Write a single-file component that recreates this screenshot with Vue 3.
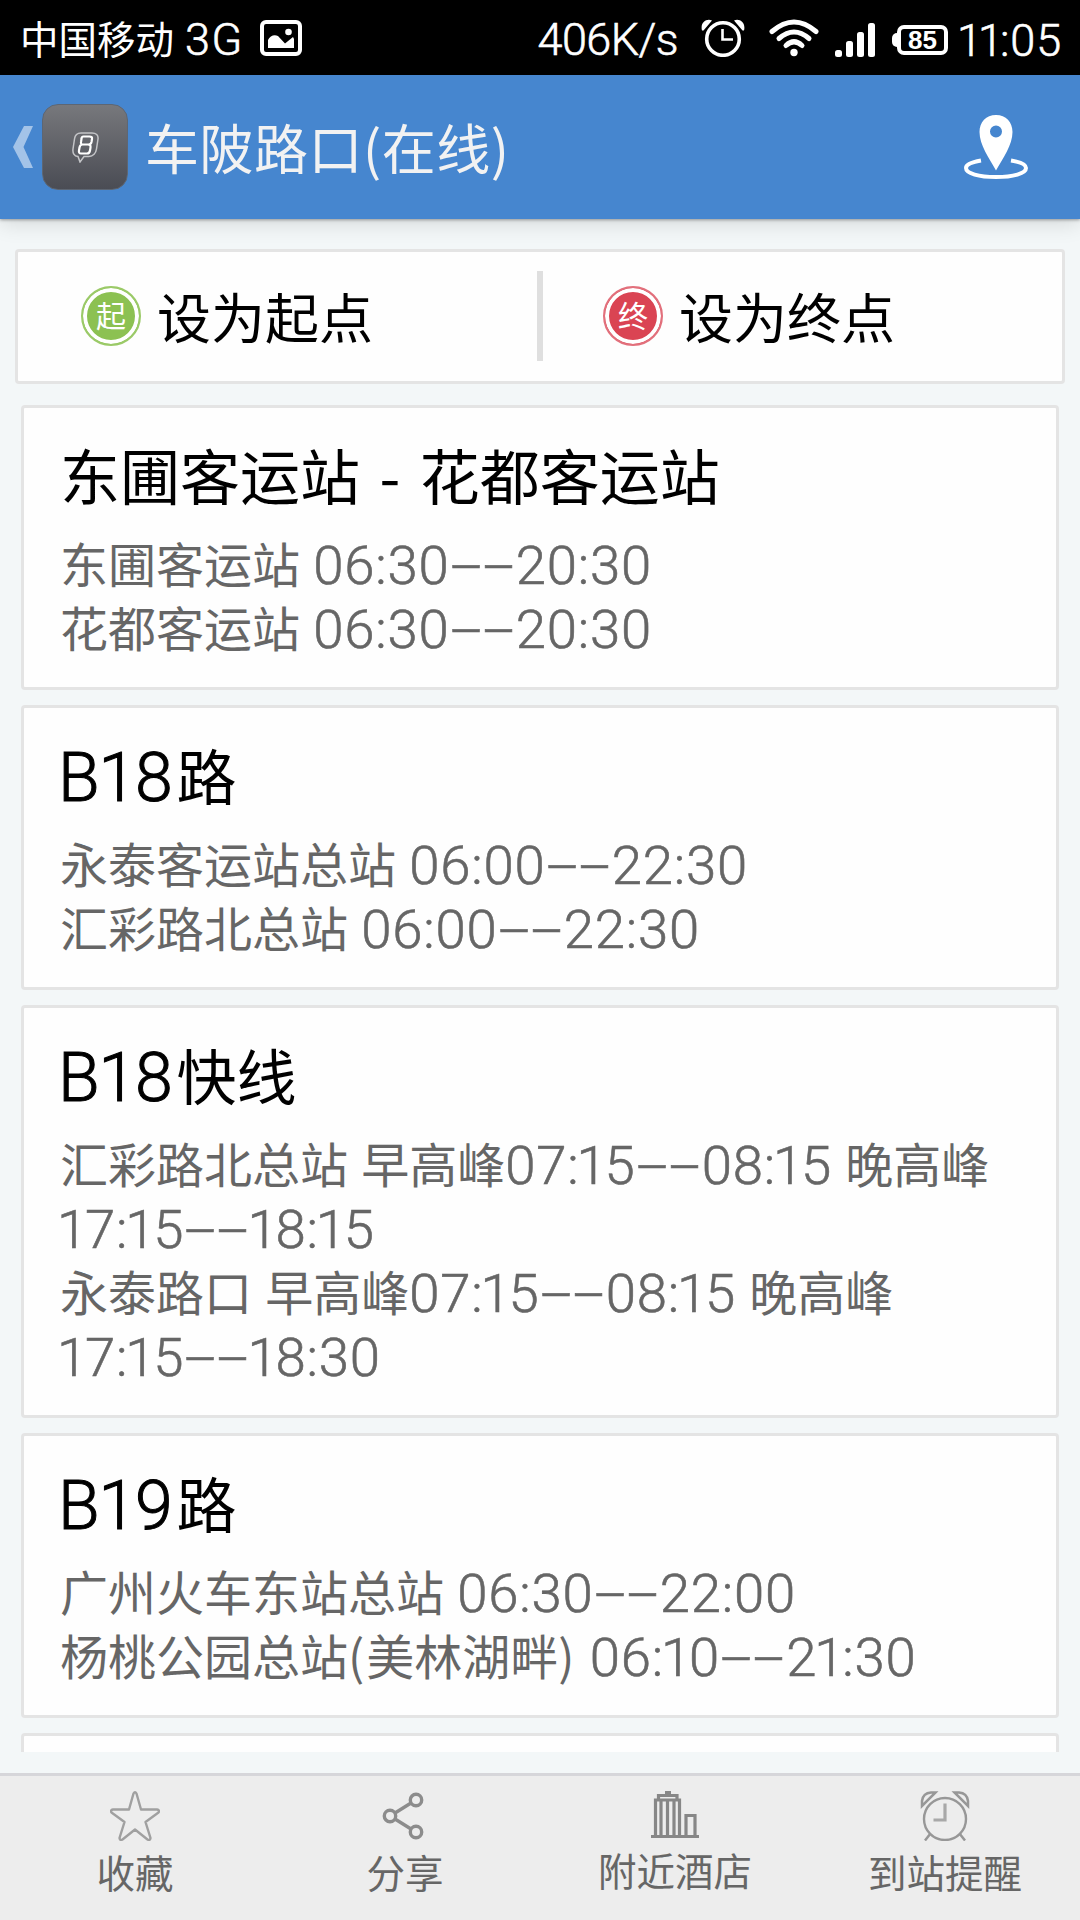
<template>
  <div class="screen">
    <!-- Status bar -->
    <div class="status-bar">
      <span class="carrier">中国移动</span>
      <span class="latin network">3G</span>
      <svg class="picture-icon" width="42" height="36" viewBox="0 0 42 36">
        <rect x="2" y="2" width="38" height="32" rx="4" fill="none" stroke="#fff" stroke-width="4" />
        <path d="M8 28V20C10 16 14 14 18 16L25 23.500L33 17L34 19V28Z" fill="#fff" />
        <circle cx="28.500" cy="12" r="3.300" fill="#fff" />
      </svg>
      <div class="status-right">
        <span class="latin speed">406K/s</span>
        <svg class="alarm-icon" width="44" height="38" viewBox="0 0 44 38">
          <circle cx="22" cy="20" r="16.300" fill="none" stroke="#fff" stroke-width="3.600" />
          <path d="M21.500 10V20.500H32" fill="none" stroke="#fff" stroke-width="2.600" />
          <path d="M1 11.500C-1 4 5 -1 11 1.500L2.500 11.500ZM43 11.500C45 4 39 -1 33 1.500L41.500 11.500Z" fill="#fff" />
        </svg>
        <svg class="wifi-icon" width="50" height="38" viewBox="0 0 50 38">
          <g fill="none" stroke="#fff" stroke-width="5" stroke-linecap="round">
            <path d="M3 12.500Q25 -6.500 47 12.500" />
            <path d="M10 19.500Q25 6.500 40 19.500" />
            <path d="M17 26.500Q25 19 33 26.500" />
          </g>
          <circle cx="25" cy="33.500" r="3.700" fill="#fff" />
        </svg>
        <svg class="signal-icon" width="40" height="34" viewBox="0 0 40 34" fill="#fff">
          <rect x="0" y="27" width="7" height="7" rx="2.500" />
          <rect x="11" y="18" width="7" height="16" rx="2.500" />
          <rect x="22" y="9" width="7" height="25" rx="2.500" />
          <rect x="33" y="0" width="7" height="34" rx="2.500" />
        </svg>
        <div class="battery">
          <span class="battery-level">85</span>
        </div>
        <span class="latin clock">
          <span v-for="(run, i) in splitRuns('11:05')" :key="i" :class="run.type">{{ run.text }}</span>
        </span>
      </div>
    </div>

    <!-- Header -->
    <header class="header">
      <svg class="back-icon" width="20" height="42" viewBox="0 0 20 42">
        <path d="M11 0H20L10.500 21L20 42H11L0 21Z" fill="#a3c3e8" />
      </svg>
      <div class="app-icon">
        <svg width="27" height="31" viewBox="0 0 27 31" fill="none">
          <path d="M9 1H20C24 1 26.500 3 26 7L24.500 17C24 21 21 24.500 17 24.500H12L8 30L6 24.500C2 24 0.500 21 1 17L2.500 7C3 3 5 1 9 1Z" stroke="#c4c5c8" stroke-width="1.500" />
          <path d="M11.500 4.500H17.500Q20.500 4.500 20 7L19.500 10Q19 12.500 16.500 12.500H11Q8.500 12.500 9 10L9.500 7Q9.500 4.500 11.500 4.500ZM10.500 12.500H16Q19 12.500 18.500 15.500L18 18.500Q17.500 21.500 15 21.500H9Q6.500 21.500 7 18.500L7.500 15.500Q8 12.500 10.500 12.500Z" stroke="#fff" stroke-width="2.200" />
        </svg>
      </div>
      <h1 class="header-title">车陂路口(在线)</h1>
      <svg class="pin-icon" width="64" height="64" viewBox="0 0 64 64">
        <path fill-rule="evenodd" d="M32 0C42 0 48.500 7 48.500 17C48.500 30 39 43 32 55.500C25 43 15.500 30 15.500 17C15.500 7 22 0 32 0ZM32 10.500A6 6 0 1 0 32 22.500A6 6 0 1 0 32 10.500Z" fill="#fff" />
        <path d="M17 45.500C8 47 2 49.500 2 53C2 58.500 15 62 32 62C49 62 62 58.500 62 53C62 49.500 56 47 47 45.500" fill="none" stroke="#fff" stroke-width="4" />
      </svg>
    </header>

    <!-- Content -->
    <main class="content">
      <div class="endpoints">
        <button class="endpoint">
          <span class="endpoint-badge start">起</span>
          <span>设为起点</span>
        </button>
        <div class="divider"></div>
        <button class="endpoint">
          <span class="endpoint-badge end">终</span>
          <span>设为终点</span>
        </button>
      </div>

      <section v-for="route in routes" :key="route.name" class="route-card">
        <h2 class="route-name">
          <span v-for="(run, i) in splitRuns(route.name)" :key="i" :class="run.type">{{ run.text }}</span>
        </h2>
        <p v-for="line in route.lines" :key="line" class="route-line">
          <span v-for="(run, i) in splitRuns(line)" :key="i" :class="run.type">{{ run.text }}</span>
        </p>
      </section>
      <section class="route-card"></section>
    </main>

    <!-- Bottom bar -->
    <nav class="bottom-bar">
      <button class="tab">
        <svg width="50" height="50" viewBox="0 0 50 50" fill="none" stroke="#a0a0a0" stroke-width="2.400" stroke-linejoin="round">
          <path d="M23.500 2.500Q25 0 26.500 2.500L31 18.500H47Q50 19 48.500 21.500L35.500 31L40.500 47Q40 50 37.500 48.500L25 38.500L12.500 48.500Q10 50 9.500 47L14.500 31L1.500 21.500Q0 19 3 18.500H19Z" />
        </svg>
        <span>收藏</span>
      </button>
      <button class="tab">
        <svg class="share-icon" width="50" height="50" viewBox="0 0 50 50" fill="none" stroke="#8c8c8c" stroke-width="3.400">
          <circle cx="12" cy="25" r="5.700" />
          <circle cx="38" cy="9" r="5.700" />
          <circle cx="38" cy="41" r="5.700" />
          <path d="M17 22L33 12M17 28L33 38" />
        </svg>
        <span>分享</span>
      </button>
      <button class="tab raised">
        <svg width="50" height="50" viewBox="0 0 50 50" fill="none" stroke="#878787" stroke-width="3.200">
          <path d="M1 45.500H49M5.500 45V9H29.500V45M11 45V9M17.500 45V9M24 45V9M8.500 8V4.500H27V8M36 45V24.500H45V45" />
          <path d="M15 2H21" stroke-width="4" />
        </svg>
        <span>附近酒店</span>
      </button>
      <button class="tab">
        <svg width="50" height="50" viewBox="0 0 50 50" fill="none" stroke="#979797" stroke-width="2.400">
          <circle cx="25" cy="28" r="21" />
          <path d="M25 12.500V29H13.500" stroke-width="3.200" stroke="#a8a8a8" />
          <path d="M2 15V10Q3 2 11 1.500H15.500ZM48 15V10Q47 2 39 1.500H34.500Z" stroke-width="2.500" />
          <path d="M10.500 42.500L5 49.500M39.500 42.500L45 49.500" stroke-width="2.500" />
        </svg>
        <span>到站提醒</span>
      </button>
    </nav>
  </div>
</template>

<script setup>
const routes = [
  {
    name: '东圃客运站 - 花都客运站',
    lines: ['东圃客运站 06:30--20:30', '花都客运站 06:30--20:30']
  },
  {
    name: 'B18路',
    lines: ['永泰客运站总站 06:00--22:30', '汇彩路北总站 06:00--22:30']
  },
  {
    name: 'B18快线',
    lines: [
      '汇彩路北总站 早高峰07:15--08:15 晚高峰',
      '17:15--18:15',
      '永泰路口 早高峰07:15--08:15 晚高峰',
      '17:15--18:30'
    ]
  },
  {
    name: 'B19路',
    lines: ['广州火车东站总站 06:30--22:00', '杨桃公园总站(美林湖畔) 06:10--21:30']
  }
]

// Split text so that digits, the narrow "1", brackets and the long dashes get their own styling
function splitRuns(text) {
  const parts = text.match(/--|1+|[()]|[B02-9:]+|[^B0-9:()-]+|-/g) || []
  return parts.map((part) => {
    if (part === '--') return { type: 'dash', text: part }
    if (part[0] === '1') return { type: 'latin one', text: part }
    if (part === '(' || part === ')') return { type: 'bracket', text: part }
    if (/^[B0-9:]/.test(part)) return { type: 'latin', text: part }
    return { type: 'cjk', text: part }
  })
}
</script>

<style>
body {
  margin: 0;
}
</style>

<style scoped>
.screen {
  width: 1080px;
  height: 1920px;
  display: flex;
  flex-direction: column;
  overflow: hidden;
  background: #f3f7f8;
  font-family: "Noto Sans CJK SC", sans-serif;
  color: #000;
}

button {
  border: none;
  background: none;
  padding: 0;
  font-family: inherit;
  color: inherit;
}

.latin {
  font-family: Roboto, "Noto Sans CJK SC", sans-serif;
  font-weight: 300;
  -webkit-text-stroke: 0.6px currentColor;
}

.status-bar {
  height: 75px;
  flex-shrink: 0;
  display: flex;
  align-items: center;
  background: #000;
  color: #fff;
  padding: 0 18px 0 20px;
  white-space: nowrap;
}

.carrier {
  font-size: 38.5px;
  line-height: 72px;
  padding-bottom: 2px;
}

.network {
  font-size: 45px;
  letter-spacing: 1.5px;
  margin-left: 11px;
  line-height: 75px;
  padding-top: 4px;
}

.picture-icon {
  margin-left: 16px;
}

.status-right {
  margin-left: auto;
  display: flex;
  align-items: center;
}

.speed,
.clock {
  font-size: 45px;
  padding-top: 3px;
}

.speed {
  letter-spacing: -0.6px;
}

.clock {
  display: flex;
  margin-left: 12px;
  padding-top: 5px;
  letter-spacing: 0.9px;
}

.alarm-icon {
  margin-left: 23px;
}

.wifi-icon {
  margin-left: 24px;
}

.signal-icon {
  margin-left: 16px;
  margin-top: 4px;
}

.battery {
  position: relative;
  width: 43px;
  height: 22px;
  margin-left: 22px;
  margin-top: 5px;
  border: 4px solid #fff;
  border-radius: 7px;
  display: flex;
  align-items: center;
  justify-content: center;
}

.battery::before {
  content: "";
  position: absolute;
  left: -9px;
  top: 4px;
  width: 6px;
  height: 14px;
  border-radius: 5px 0 0 5px;
  background: #fff;
}

.battery-level {
  font-family: "Liberation Sans", Arial, sans-serif;
  font-weight: 700;
  font-size: 26px;
  line-height: 22px;
}

.header {
  position: relative;
  z-index: 1;
  height: 144px;
  flex-shrink: 0;
  display: flex;
  align-items: center;
  padding: 0 52px 0 13px;
  background: #4686cf;
  box-shadow: 0 1px 3px rgba(0, 0, 0, 0.35), 0 5px 20px rgba(0, 0, 0, 0.12);
}

.app-icon {
  width: 86px;
  height: 86px;
  box-sizing: border-box;
  margin-left: 9px;
  border-radius: 16px;
  border: 1px solid #5d6673;
  background: linear-gradient(#77787c, #4a4c54);
  display: flex;
  align-items: center;
  justify-content: center;
}

.header-title {
  margin: 0 0 0 17px;
  font-size: 54px;
  font-weight: 400;
  line-height: 80px;
  letter-spacing: 0.5px;
  color: #f2f2f2;
}

.pin-icon {
  margin-left: auto;
}

.content {
  height: 1533px;
  flex-shrink: 0;
  box-sizing: border-box;
  padding: 30px 15px 0;
  overflow: hidden;
}

.endpoints {
  height: 135px;
  box-sizing: border-box;
  display: flex;
  align-items: center;
  margin-bottom: 21px;
  padding-bottom: 2px;
  border: 3px solid #e4e4e4;
  border-radius: 4px;
  background: #fefefe;
}

.endpoint {
  width: 519px;
  display: flex;
  align-items: center;
  padding-left: 63px;
  gap: 16px;
  font-size: 54px;
  line-height: 80px;
}

.endpoint:last-child {
  padding-left: 60px;
}

.endpoint-badge {
  width: 60px;
  height: 60px;
  box-sizing: border-box;
  border: 2px solid;
  border-radius: 50%;
  box-shadow: inset 0 0 0 4px #fff;
  font-size: 30px;
  font-weight: 400;
  line-height: 53px;
  text-align: center;
  color: #fff;
}

.endpoint-badge.start {
  background: #8cc152;
  border-color: #9bca68;
}

.endpoint-badge.end {
  background: #da4453;
  border-color: #e2707c;
}

.divider {
  width: 6px;
  height: 90px;
  background: #dfdfdf;
}

.route-card {
  margin: 0 6px 15px;
  padding: 24px 0 29px 36px;
  border: 3px solid #e4e4e4;
  border-radius: 4px;
  background: #fefefe;
}

.route-name {
  margin: 0 0 14px;
  height: 84px;
  font-size: 60px;
  font-weight: 400;
  line-height: 84px;
  word-spacing: 6px;
  white-space: pre;
}

.route-name .latin {
  position: relative;
  top: 1px;
  left: -2px;
  font-size: 68px;
  line-height: 1;
  letter-spacing: 1.8px;
  -webkit-text-stroke-width: 1px;
}

.route-line {
  margin: 0;
  height: 64px;
  font-size: 48px;
  line-height: 64px;
  word-spacing: 2.5px;
  color: #666;
  white-space: pre;
}

.route-line .latin {
  position: relative;
  top: 1px;
  font-size: 54.5px;
  line-height: 1;
  letter-spacing: 0.8px;
}

.latin.one {
  margin: 0 -3px;
}

.clock .one {
  letter-spacing: -4px;
  margin-right: 1px;
}

.bracket {
  margin-right: 2px;
}

.dash {
  display: inline-block;
  width: 66px;
  line-height: 1;
  font-family: Roboto, sans-serif;
  font-weight: 300;
  font-size: 54px;
  -webkit-text-stroke: 0.4px currentColor;
  transform: translateY(1px) scaleX(2.1);
  transform-origin: left;
}

.bottom-bar {
  margin-top: auto;
  height: 147px;
  box-sizing: border-box;
  display: flex;
  border-top: 3px solid #d6d6da;
  background: #ededed;
}

.tab {
  flex: 1;
  display: flex;
  flex-direction: column;
  align-items: center;
  padding-top: 15px;
  font-size: 38.5px;
  line-height: 48px;
  color: #666;
}

.tab span {
  margin-top: 6px;
}

.tab.raised span {
  margin-top: 4px;
}

.share-icon {
  margin-right: 4px;
}
</style>
